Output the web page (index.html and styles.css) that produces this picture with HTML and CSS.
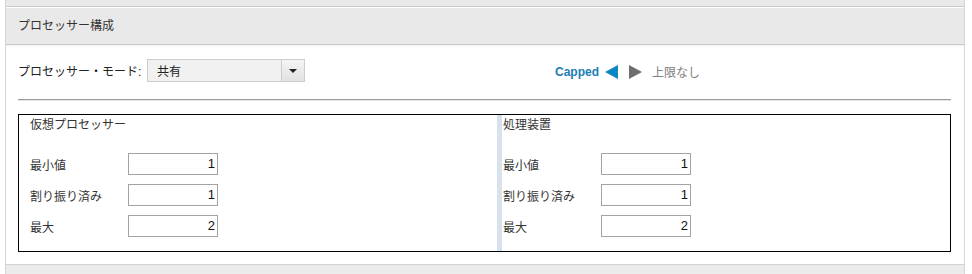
FILE: index.html
```html
<!DOCTYPE html>
<html lang="ja">
<head>
<meta charset="utf-8">
<link rel="stylesheet" href="styles.css">
</head>
<body>
<div class="panel">
  <div class="topband"></div>
  <div class="header">プロセッサー構成</div>
  <div class="content">
    <div class="mode-row">
      <span class="mode-label">プロセッサー・モード:</span>
      <div class="select">
        <span class="select-value">共有</span>
        <span class="select-btn"><span class="caret"></span></span>
      </div>
      <div class="toggle">
        <span class="capped">Capped</span>
        <span class="tri tri-left"></span>
        <span class="tri tri-right"></span>
        <span class="uncapped">上限なし</span>
      </div>
    </div>
    <div class="rule"></div>
    <div class="box">
      <div class="col col-left">
        <div class="col-title">仮想プロセッサー</div>
        <div class="field"><span class="flabel">最小値</span><span class="input">1</span></div>
        <div class="field"><span class="flabel">割り振り済み</span><span class="input">1</span></div>
        <div class="field"><span class="flabel">最大</span><span class="input">2</span></div>
      </div>
      <div class="divider"></div>
      <div class="col col-right">
        <div class="col-title">処理装置</div>
        <div class="field"><span class="flabel">最小値</span><span class="input">1</span></div>
        <div class="field"><span class="flabel">割り振り済み</span><span class="input">1</span></div>
        <div class="field"><span class="flabel">最大</span><span class="input">2</span></div>
      </div>
    </div>
  </div>
  <div class="footer"></div>
</div>
</body>
</html>
```
FILE: styles.css
```css
html, body {
  margin: 0;
  padding: 0;
  background: #ffffff;
}
body {
  font-family: "Liberation Sans", "Noto Sans CJK JP", sans-serif;
  font-size: 12px;
  color: #333333;
}
.panel {
  margin-left: 5px;
  width: 958px;
  height: 274px;
  border-left: 1px solid #d6d6d6;
  border-right: 1px solid #d6d6d6;
  display: flex;
  flex-direction: column;
  overflow: hidden;
}
.topband {
  flex: none;
  height: 6px;
  background: #e9e9e9;
  border-bottom: 1px solid #c9c9c9;
}
.header {
  flex: none;
  margin-top: 1px;
  height: 36px;
  line-height: 36px;
  background: #e9e9e9;
  border-bottom: 1px solid #c6c6c6;
  box-shadow: 0 1px 2px rgba(0,0,0,0.06);
  padding-left: 12px;
  color: #333;
}
.content {
  flex: none;
  padding: 0 13px 0 12px;
}
.mode-row {
  margin-top: 14px;
  height: 23px;
  display: flex;
  align-items: center;
}
.mode-label {
  width: 129px;
  color: #222;
}
.select {
  width: 156px;
  height: 21px;
  border: 1px solid #cccccc;
  background: #f1f1f1;
  display: flex;
  align-items: center;
}
.select-value {
  flex: 1;
  padding-left: 9px;
  color: #222;
}
.select-btn {
  width: 22px;
  height: 21px;
  border-left: 1px solid #cccccc;
  background: linear-gradient(#f4f4f4, #e2e2e2);
  display: flex;
  align-items: center;
  justify-content: center;
}
.caret {
  width: 0;
  height: 0;
  border-left: 4px solid transparent;
  border-right: 4px solid transparent;
  border-top: 4px solid #222;
}
.toggle {
  margin-left: 250px;
  padding-top: 2px;
  display: flex;
  align-items: center;
}
.capped {
  font-weight: bold;
  color: #1b7db3;
}
.tri {
  width: 0;
  height: 0;
  border-top: 7px solid transparent;
  border-bottom: 7px solid transparent;
}
.tri-left {
  margin-left: 6px;
  border-right: 13px solid #0d86c2;
}
.tri-right {
  margin-left: 11px;
  border-left: 13px solid #6e6e6e;
}
.uncapped {
  margin-left: 10px;
  color: #808080;
}
.rule {
  margin-top: 17px;
  height: 1px;
  background: #9c9c9c;
  border-bottom: 1px solid #e4e4e4;
}
.box {
  margin-top: 13px;
  height: 136px;
  border: 1px solid #000000;
  display: flex;
}
.col {
  display: flex;
  flex-direction: column;
}
.col-left {
  width: 467px;
  padding-left: 11px;
}
.col-right {
  flex: 1;
  padding-left: 1px;
}
.divider {
  width: 5px;
  background: #d7e2ec;
}
.col-title {
  height: 38px;
  line-height: 20px;
  color: #333;
}
.field {
  display: flex;
  align-items: flex-start;
  height: 31px;
}
.flabel {
  width: 98px;
  padding-top: 5px;
  line-height: 16px;
  color: #333;
}
.input {
  box-sizing: border-box;
  width: 90px;
  height: 22px;
  border: 1px solid #a3a3a3;
  text-align: right;
  padding-right: 2px;
  line-height: 20px;
  font-size: 13px;
  color: #111;
}
.footer {
  margin-top: 12px;
  flex: 1;
  background: #ebebeb;
  border-top: 1px solid #d2d2d2;
}
```
